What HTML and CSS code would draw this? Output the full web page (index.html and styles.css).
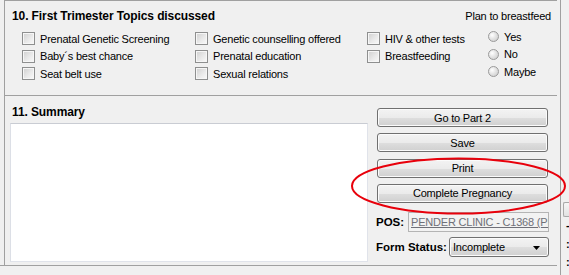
FILE: index.html
```html
<!DOCTYPE html>
<html>
<head>
<meta charset="utf-8">
<title>Pregnancy form</title>
<link rel="stylesheet" href="styles.css">
</head>
<body>
<div class="screen">
  <div class="main">
    <div class="inner">
      <section class="sec10">
        <div class="sec-head">
          <h2 class="title">10. First Trimester Topics discussed</h2>
          <span class="plan">Plan to breastfeed</span>
        </div>
        <div class="topics">
          <div class="col col1">
            <div class="opt"><span class="cb"></span>Prenatal Genetic Screening</div>
            <div class="opt"><span class="cb"></span>Baby&#180;s best chance</div>
            <div class="opt"><span class="cb"></span>Seat belt use</div>
          </div>
          <div class="col col2">
            <div class="opt"><span class="cb"></span>Genetic counselling offered</div>
            <div class="opt"><span class="cb"></span>Prenatal education</div>
            <div class="opt"><span class="cb"></span>Sexual relations</div>
          </div>
          <div class="col col3">
            <div class="opt"><span class="cb"></span>HIV &amp; other tests</div>
            <div class="opt"><span class="cb"></span>Breastfeeding</div>
          </div>
          <div class="col radios">
            <div class="opt"><span class="rb"></span>Yes</div>
            <div class="opt"><span class="rb"></span>No</div>
            <div class="opt"><span class="rb"></span>Maybe</div>
          </div>
        </div>
      </section>
      <section class="sec11">
        <div class="sum">
          <h2 class="title">11. Summary</h2>
          <div class="textarea"></div>
        </div>
        <div class="actions">
          <button class="btn">Go to Part 2</button>
          <button class="btn">Save</button>
          <button class="btn">Print</button>
          <button class="btn">Complete Pregnancy</button>
          <div class="field pos-field">
            <span class="lbl">POS:</span>
            <span class="input">PENDER CLINIC - C1368 (PENDER)</span>
          </div>
          <div class="field status-field">
            <span class="lbl">Form Status:</span>
            <span class="select">Incomplete
              <svg class="arrow" width="7" height="4" viewBox="0 0 7 4"><path d="M0 0H7L3.5 4Z" fill="#000"/></svg>
            </span>
          </div>
        </div>
      </section>
    </div>
  </div>
  <div class="side">
    <span class="sbox"></span>
    <span class="sglyph g1">-</span>
    <span class="sglyph g2">:</span>
    <span class="sglyph g3">:</span>
  </div>
  <svg class="mark" width="569" height="275" viewBox="0 0 569 275">
    <ellipse cx="458.5" cy="186" rx="106.5" ry="27.5" fill="none" stroke="#e8000b" stroke-width="2"/>
  </svg>
</div>
</body>
</html>
```

FILE: styles.css
```css
* { box-sizing: border-box; }

body {
  margin: 0;
  background: #f0f0f0;
  font-family: "Liberation Sans", Arial, sans-serif;
  font-size: 11px;
  letter-spacing: -0.2px;
  color: #000;
}

.screen {
  position: relative;
  width: 569px;
  height: 275px;
  display: flex;
  overflow: hidden;
}

.main {
  flex: none;
  width: 557px;
  height: 266px;
  border-bottom: 1px solid #a0a0a0;
}

.inner {
  margin-left: 4px;
  height: 265px;
  border-left: 1px solid #a0a0a0;
  border-top: 1px solid #a0a0a0;
}

.title {
  margin: 0;
  font-size: 12px;
  font-weight: bold;
  letter-spacing: -0.1px;
  line-height: 14px;
}

/* Section 10 */
.sec10 {
  height: 95px;
  border-bottom: 1px solid #a0a0a0;
  padding: 8px 6px 0 7px;
}

.sec-head {
  display: flex;
  justify-content: space-between;
  align-items: baseline;
}

.topics {
  display: flex;
  margin-top: 7px;
  padding-left: 10px;
}

.col {
  flex: none;
  display: flex;
  flex-direction: column;
}

.col1 { width: 173px; }
.col2 { width: 172px; }
.col3 { width: 121px; }
.radios { margin-top: -2px; }

.opt {
  display: flex;
  align-items: center;
  height: 17.5px;
  white-space: nowrap;
}

.cb {
  flex: none;
  width: 13px;
  height: 13px;
  margin-right: 5px;
  border: 1px solid #8e8f8f;
  background: linear-gradient(135deg, #cfcfcf 0%, #e9e9e9 55%, #fafafa 100%);
  box-shadow: inset 0 0 0 1px #f6f6f6;
}

.rb {
  flex: none;
  width: 11px;
  height: 11px;
  margin-right: 5px;
  border-radius: 50%;
  border: 1px solid #9a9a9a;
  background: radial-gradient(circle at 35% 35%, #ffffff 0%, #e4e4e4 45%, #c8c8c8 100%);
}

/* Section 11 */
.sec11 {
  display: flex;
  height: 169px;
}

.sum {
  padding: 9px 0 0 5px;
}

.sum .title {
  padding-left: 2px;
}

.textarea {
  margin-top: 4px;
  width: 358px;
  height: 139px;
  background: #fff;
  border: 1px solid;
  border-color: #c9ccd3 #e0e3ea #e0e3ea #dcdfe6;
}

.actions {
  margin-left: 8px;
  padding-top: 12px;
  width: 174px;
  display: flex;
  flex-direction: column;
}

.btn {
  width: 171px;
  height: 19px;
  margin: 0 0 6.33px 1px;
  padding: 0;
  font-family: inherit;
  font-size: 11px;
  letter-spacing: -0.2px;
  color: #000;
  border: 1px solid #707070;
  border-radius: 3px;
  background: linear-gradient(#f3f3f3 0%, #ebebeb 50%, #dedede 52%, #d0d0d0 100%);
  box-shadow: inset 0 0 0 1px #fbfbfb;
  line-height: 16px;
}

.field {
  display: flex;
  align-items: center;
  justify-content: space-between;
  width: 173px;
}

.pos-field {
  margin-top: 2.7px;
}

.status-field {
  margin-top: 5px;
}

.lbl {
  font-weight: bold;
  font-size: 11.5px;
  letter-spacing: 0;
}

.input {
  width: 141px;
  height: 20px;
  border: 1px solid #b4b4b4;
  background: #f2f2f2;
  color: #6f7078;
  text-decoration: underline;
  white-space: nowrap;
  overflow: hidden;
  padding-left: 2px;
  line-height: 18px;
}

.select {
  position: relative;
  width: 100px;
  height: 20px;
  border: 1px solid #707070;
  border-radius: 3px;
  background: linear-gradient(#f3f3f3 0%, #ebebeb 50%, #dedede 52%, #d0d0d0 100%);
  box-shadow: inset 0 0 0 1px #fbfbfb;
  padding-left: 3px;
  line-height: 18px;
}

.arrow {
  position: absolute;
  right: 8px;
  top: 8px;
}

/* Right edge strip */
.side {
  flex: none;
  width: 9px;
  height: 275px;
  margin-left: 3px;
  border-left: 1px solid #a0a0a0;
  display: flex;
  flex-direction: column;
  align-items: flex-start;
}

.sbox {
  margin: 202px 0 0 2px;
  width: 10px;
  height: 15px;
  border: 1px solid #a8a8a8;
  border-right: none;
  border-radius: 2px 0 0 2px;
  background: linear-gradient(#f6f6f6, #e2e2e2);
}

.sglyph {
  margin-left: 5px;
  font-weight: bold;
  font-size: 11px;
  line-height: 11px;
}

.g1 { margin-top: 3px; }
.g2 { margin-top: 8px; }
.g3 { margin-top: 7px; }

.mark {
  position: absolute;
  left: 0;
  top: 0;
  pointer-events: none;
}
```
